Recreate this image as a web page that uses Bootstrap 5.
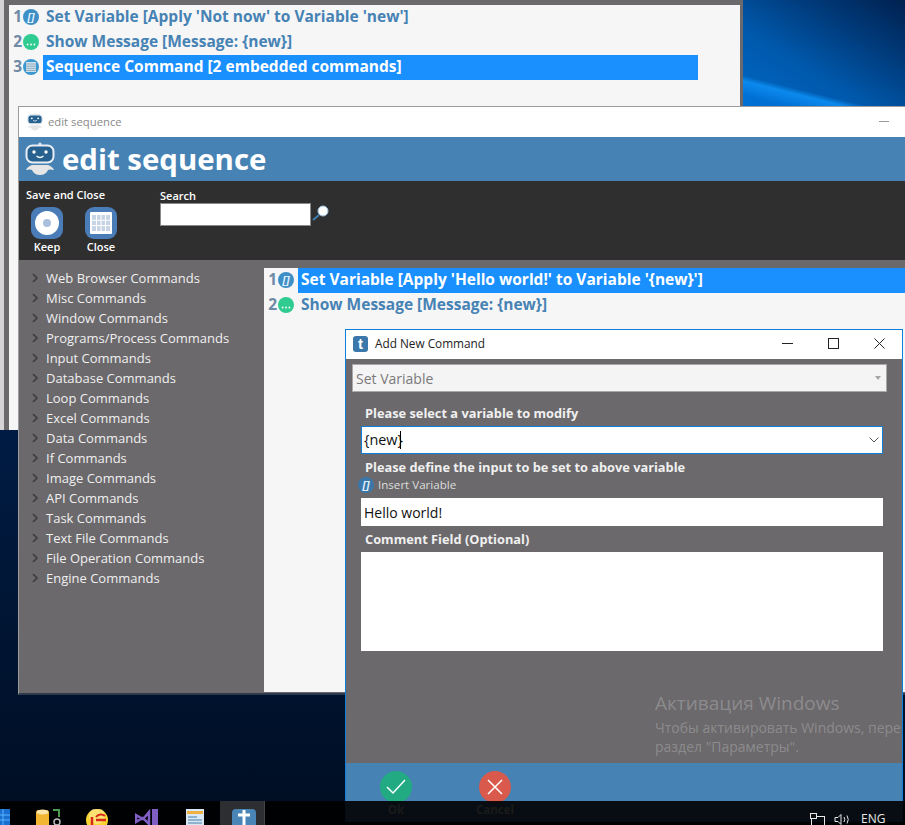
<!DOCTYPE html>
<html lang="en">
<head>
<meta charset="utf-8">
<title>edit sequence</title>
<link href="https://cdn.jsdelivr.net/npm/bootstrap@5.3.0/dist/css/bootstrap.min.css" rel="stylesheet">
<style>
html,body{width:905px;height:825px;overflow:hidden;margin:0}
body{font-family:"Open Sans","Noto Sans",sans-serif;
 background:
  linear-gradient(194deg,transparent 0 79%,rgba(12,140,240,.95) 83%,rgba(8,130,232,.9) 87%,rgba(0,112,214,.9) 93%) 743px 0/162px 106px no-repeat,
  linear-gradient(212deg,#00214f 0%,#003a7a 30%,#0058ab 62%,#0068c4 100%) 743px 0/162px 106px no-repeat,
  linear-gradient(180deg,#00173a 0%,#001c45 50%,#000e22 100%)}
.scene{position:relative;width:905px;height:825px;overflow:hidden}
.win{position:absolute}
.win-back{left:0;top:0;width:743px;height:430px;background:#6b696c;padding:5px 3px 0 9px}
.back-strip{position:absolute;left:0;top:0;width:4px;height:100%;background:#d4d4d4}
.pane{background:#f6f6f6}
.back-pane{height:425px}
.cmd-row{height:25px;display:flex;align-items:center;font-weight:700;font-size:15.5px;color:#4682b4;white-space:nowrap}
.cmd-num{width:13px;text-align:right;color:#6e8aa6;font-size:15.5px;line-height:23px;height:25px}
.cmd-ico{width:16px;height:16px;margin:0 4px 2px 1px;flex:none;display:block}
.cmd-txt{padding-left:3px;line-height:23px;height:25px;flex:none}
.cmd-on{background:#1a90ff;color:#fff}
.back-pane .cmd-on{width:655px}
.ico-var{border-radius:50%;background:#3e8fc6;color:#e4f3ff;font:italic 700 10.5px/16px "Liberation Sans",sans-serif;text-align:center}
.win-edit{left:18px;top:106px;width:900px;height:589px;background:#6b696c;border:1px solid #9c9c9c;border-bottom:2px solid #2c3a4c;display:flex;flex-direction:column}
.edit-title{height:30px;background:#fff;display:flex;align-items:center;padding-left:8px;font-size:11.3px;color:#8a8a8a;flex:none}
.edit-title svg{margin-right:5px}
.edit-min{position:absolute;left:860px;top:14px;width:10px;height:1px;background:#9a9a9a}
.edit-head{height:44px;background:#4682b4;display:flex;align-items:center;padding-left:6px;flex:none;color:#fff;font-weight:700;font-size:29.4px;line-height:46px}
.edit-head svg{margin-right:7px}
.edit-tools{height:79px;background:#2f2f2f;flex:none;display:flex;color:#fff;font-size:11px;font-weight:600;padding-left:7px}
.tool-group{width:134px;padding-top:6px;line-height:15px}
.tool-btns{display:flex;gap:22px;padding-left:5px;padding-top:5px}
.tool-btn{width:32px;text-align:center}
.tool-btn svg{display:block}
.tool-btn span{display:block;margin-top:0;line-height:15px}
.search-box{padding-top:8px;line-height:14px}
.search-line{display:flex;align-items:flex-start}
.search-in{width:151px;height:23px;background:#fff;border:1px solid #8a8a8a}
.edit-body{flex:1;display:flex;min-height:0}
.side{width:245px;flex:none;padding-top:8px;color:#f0f0f0;font-size:13px}
.side-row{height:20px;line-height:20px;display:flex;align-items:center;padding-left:13px;white-space:nowrap}
.side-row svg{margin-right:8px;flex:none}
.main{flex:1;margin-top:8px;background:#f6f6f6;height:424px}
.main .cmd-num{width:13px}
.main .cmd-on{flex:1}
.win-add{left:345px;top:329px;width:558px;height:493px;background:#6b696c;border:1px solid #0f7fdc;display:flex;flex-direction:column}
.add-title{height:29px;background:#fff;display:flex;align-items:center;font-size:11.8px;color:#222;padding:0 0 2px 7px;flex:none}
.t-logo{width:15px;height:16px;border-radius:3px;background:#3a78ab;color:#fff;font:700 15px/15px "Liberation Sans",sans-serif;text-align:center;margin-right:7px}
.win-ctrls{margin-left:auto;display:flex;gap:31px;padding-right:17px;align-items:center}
.win-ctrls svg{display:block}
.add-body{flex:1;display:flex;flex-direction:column;padding:5px 15px 0 6px;min-height:0}
.combo{height:28px;background:#f4f4f4;border:1px solid #a8a8a8;display:flex;align-items:center;color:#7a7a7a;font-size:14px;padding:0 4px 0 3px}
.caret-d{margin-left:auto;width:0;height:0;border:3px solid transparent;border-top:4px solid #a5a5a5;border-bottom:0;margin-right:1px}
.fld-label{color:#f0f0f0;font-weight:700;font-size:12.8px;line-height:16px;padding-left:13px}
.lab1{margin-top:13px}
.lab2{margin-top:5px}
.lab3{margin-top:5px}
.fld{margin-left:9px;margin-right:4px;background:#fff;color:#111;font-size:14px;display:flex;align-items:center;padding-left:3px;height:28px}
.fld-sel{margin-top:5px;border:1px solid #0f7fdc;padding-left:2px;font-size:14.4px}
.cursor{display:inline-block;width:1px;height:18px;background:#000;margin-left:-3px}
.chev{margin-left:auto;margin-right:3px}
.ins-var{display:flex;align-items:center;height:16px;margin-top:2px;padding-left:6px;font-size:11.6px;color:#dcdcdc;margin-bottom:5px}
.ins-var .cmd-ico{margin:0 4px 0 0;background:#3a78ab}
.fld-area{height:99px;margin-top:5px;flex:none}
.add-foot{height:58px;background:#4682b4;flex:none;display:flex;padding-left:34px;gap:67px;color:#fff;font-size:11.5px;font-weight:700;text-align:center}
.foot-btn{width:32px;padding-top:8px}
.foot-btn svg{display:block}
.foot-btn span{display:block;line-height:14px;white-space:nowrap;margin-left:-10px;margin-right:-10px}
.activate{position:absolute;left:655px;top:690px;color:rgba(255,255,255,.24);font-size:14px;line-height:19px;white-space:nowrap;z-index:3}
.activate b{display:block;font-weight:400;font-size:19px;line-height:26px;margin-bottom:2px}
.taskbar{position:absolute;left:0;top:801px;width:905px;height:24px;background:rgba(0,0,0,.9);z-index:5;overflow:hidden}
.task-tile{position:absolute;top:0;height:24px}
.task-on{left:220px;width:45px;background:#2c2e31;border-right:1px solid #444}
.tray{position:absolute;left:810px;top:12px;display:flex;align-items:center;gap:9px;color:#e8e8e8;font-size:12px;line-height:12px;white-space:nowrap}
.task-ico{position:absolute;top:8px;display:block}
.ti-a{left:-2px}.ti-b{left:35px}.ti-c{left:86px}.ti-d{left:135px}.ti-e{left:186px}.ti-f{left:12px}
</style>
</head>
<body>
<svg width="0" height="0" class="d-none">
<defs>
<symbol id="robot" viewBox="0 0 30 34">
 <circle cx="15" cy="2" r="1.6" fill="#dfe8f0"/>
 <rect x="1.5" y="3.5" width="27" height="17" rx="6" fill="#27618f" stroke="#e8eef3" stroke-width="2"/>
 <circle cx="9" cy="10" r="1.7" fill="#fff"/><circle cx="21" cy="10" r="1.7" fill="#fff"/>
 <path d="M11.5 14q3.5 3 7 0" stroke="#fff" stroke-width="1.4" fill="none"/>
 <path d="M7 23h16q5 2 6 5-5-1-6 0-2 5-8 5t-8-5q-1-1-6 0 1-3 6-5z" fill="#e6e6e6"/>
</symbol>
<symbol id="msg" viewBox="0 0 16 16">
 <circle cx="8" cy="8" r="8" fill="#2fcb91"/>
 <circle cx="4.6" cy="10.5" r=".9" fill="#fff"/><circle cx="8" cy="10.5" r=".9" fill="#fff"/><circle cx="11.4" cy="10.5" r=".9" fill="#fff"/>
</symbol>
<symbol id="seq" viewBox="0 0 16 16">
 <circle cx="8" cy="8" r="8" fill="#3a97cf"/>
 <rect x="3" y="3" width="10" height="10" fill="#cfe0ea"/>
 <path d="M3 5h10M3 7.2h10M3 9.4h10M3 11.5h10" stroke="#8aa8bb" stroke-width=".9"/>
</symbol>
<symbol id="chev" viewBox="0 0 6 10"><path d="M1 1l4 4-4 4" fill="none" stroke="#3f3f3f" stroke-width="1.7"/></symbol>
</defs>
</svg>
<div class="scene">

 <div class="win win-back">
  <div class="back-strip"></div>
  <div class="pane back-pane">
   <div class="cmd-row"><span class="cmd-num">1</span><span class="cmd-ico ico-var">[]</span><span class="cmd-txt">Set Variable [Apply 'Not now' to Variable 'new']</span></div>
   <div class="cmd-row"><span class="cmd-num">2</span><svg class="cmd-ico"><use href="#msg"/></svg><span class="cmd-txt">Show Message [Message: {new}]</span></div>
   <div class="cmd-row"><span class="cmd-num">3</span><svg class="cmd-ico"><use href="#seq"/></svg><span class="cmd-txt cmd-on">Sequence Command [2 embedded commands]</span></div>
  </div>
 </div>

 <div class="win win-edit">
  <div class="edit-title"><svg width="16" height="18"><use href="#robot"/></svg>edit sequence<span class="edit-min"></span></div>
  <div class="edit-head"><svg width="30" height="34"><use href="#robot"/></svg>edit sequence</div>
  <div class="edit-tools">
   <div class="tool-group">Save and Close
    <div class="tool-btns">
     <div class="tool-btn"><svg width="32" height="32"><rect width="32" height="32" rx="9" fill="#4a7db8"/><circle cx="16" cy="16" r="12" fill="#fff"/><circle cx="16" cy="16" r="4" fill="#a9c0dc"/></svg><span>Keep</span></div>
     <div class="tool-btn"><svg width="32" height="32"><rect width="32" height="32" rx="9" fill="#4a7db8"/><rect x="5" y="5" width="22" height="22" rx="1" fill="#fff"/><path d="M7 8h18v16H7z" fill="#c6d4e6"/><path d="M11.5 8v16M16 8v16M20.5 8v16M7 13.3h18M7 18.6h18" stroke="#fff"/></svg><span>Close</span></div>
    </div>
   </div>
   <div class="search-box">Search
    <div class="search-line"><div class="search-in"></div><svg width="18" height="20"><path d="M2 17l6-5" stroke="#3f7eb1" stroke-width="2"/><circle cx="12" cy="8" r="5" fill="#fff" stroke="#9cc3e4"/></svg></div>
   </div>
  </div>
  <div class="edit-body">
   <div class="side">
    <div class="side-row"><svg width="6" height="10"><use href="#chev"/></svg>Web Browser Commands</div>
    <div class="side-row"><svg width="6" height="10"><use href="#chev"/></svg>Misc Commands</div>
    <div class="side-row"><svg width="6" height="10"><use href="#chev"/></svg>Window Commands</div>
    <div class="side-row"><svg width="6" height="10"><use href="#chev"/></svg>Programs/Process Commands</div>
    <div class="side-row"><svg width="6" height="10"><use href="#chev"/></svg>Input Commands</div>
    <div class="side-row"><svg width="6" height="10"><use href="#chev"/></svg>Database Commands</div>
    <div class="side-row"><svg width="6" height="10"><use href="#chev"/></svg>Loop Commands</div>
    <div class="side-row"><svg width="6" height="10"><use href="#chev"/></svg>Excel Commands</div>
    <div class="side-row"><svg width="6" height="10"><use href="#chev"/></svg>Data Commands</div>
    <div class="side-row"><svg width="6" height="10"><use href="#chev"/></svg>If Commands</div>
    <div class="side-row"><svg width="6" height="10"><use href="#chev"/></svg>Image Commands</div>
    <div class="side-row"><svg width="6" height="10"><use href="#chev"/></svg>API Commands</div>
    <div class="side-row"><svg width="6" height="10"><use href="#chev"/></svg>Task Commands</div>
    <div class="side-row"><svg width="6" height="10"><use href="#chev"/></svg>Text File Commands</div>
    <div class="side-row"><svg width="6" height="10"><use href="#chev"/></svg>File Operation Commands</div>
    <div class="side-row"><svg width="6" height="10"><use href="#chev"/></svg>Engine Commands</div>
   </div>
   <div class="main">
    <div class="cmd-row"><span class="cmd-num">1</span><span class="cmd-ico ico-var">[]</span><span class="cmd-txt cmd-on">Set Variable [Apply 'Hello world!' to Variable '{new}']</span></div>
    <div class="cmd-row"><span class="cmd-num">2</span><svg class="cmd-ico"><use href="#msg"/></svg><span class="cmd-txt">Show Message [Message: {new}]</span></div>
   </div>
  </div>
 </div>

 <div class="win win-add">
  <div class="add-title"><span class="t-logo">t</span>Add New Command
   <div class="win-ctrls">
    <svg width="11" height="11"><path d="M0 5.5h11" stroke="#222"/></svg>
    <svg width="11" height="11" class="ms-1"><rect x=".5" y=".5" width="10" height="10" fill="none" stroke="#222"/></svg>
    <svg width="11" height="11" class="ms-1"><path d="M.5.5l10 10M10.5.5l-10 10" stroke="#222"/></svg>
   </div>
  </div>
  <div class="add-body">
   <div class="combo">Set Variable<span class="caret-d"></span></div>
   <div class="fld-label lab1">Please select a variable to modify</div>
   <div class="fld fld-sel">{new}<span class="cursor"></span><svg class="chev" width="10" height="6"><path d="M.5.5l4.5 4.5 4.500-4.500" fill="none" stroke="#555"/></svg></div>
   <div class="fld-label lab2">Please define the input to be set to above variable</div>
   <div class="ins-var"><span class="cmd-ico ico-var">[]</span>Insert Variable</div>
   <div class="fld">Hello world!</div>
   <div class="fld-label lab3">Comment Field (Optional)</div>
   <div class="fld fld-area"></div>
  </div>
  <div class="add-foot">
   <div class="foot-btn"><svg width="32" height="32"><circle cx="16" cy="16" r="16" fill="#22ab83"/><path d="M7 16l6 6 12-13" fill="none" stroke="#fff" stroke-width="1.5"/></svg><span>Ok</span></div>
   <div class="foot-btn"><svg width="32" height="32"><circle cx="16" cy="16" r="16" fill="#d9594c"/><path d="M9 9l14 14M23 9L9 23" fill="none" stroke="#fff" stroke-width="1.5"/></svg><span>Cancel</span></div>
  </div>
 </div>

 <div class="activate"><b>Активация Windows</b>Чтобы активировать Windows, пере<br>раздел "Параметры".</div>

 <div class="taskbar">
  <svg class="task-ico ti-a" width="12" height="16"><rect width="12" height="20" fill="#1a6fd0"/><path d="M0 6h12M0 11h12M5 0v20" stroke="#58b4ff"/></svg>
  <svg class="task-ico ti-b" width="26" height="16"><rect x="1" y="1" width="13" height="20" rx="3" fill="#f2b632"/><ellipse cx="7.500" cy="3" rx="6" ry="2.500" fill="#fbe6a8"/><path d="M18 1h6v7" fill="none" stroke="#4e9a50" stroke-width="2"/><circle cx="22" cy="13" r="3" fill="none" stroke="#bbb" stroke-width="1.500"/></svg>
  <svg class="task-ico ti-c" width="23" height="16"><circle cx="11" cy="11" r="11" fill="#f9d332"/><circle cx="11" cy="7" r="8" fill="#fff3b0" opacity=".5"/><path d="M6 8v9M10 11h10" stroke="#d9281b" stroke-width="2.500"/><path d="M19 7a6 6 0 0 0-9 1" stroke="#d9281b" stroke-width="2" fill="none"/></svg>
  <svg class="task-ico ti-d" width="24" height="16"><path d="M1 6l5 3 3 0 5-6v12l-5-5H6l-5 3z" fill="none" stroke="#7f5fc4" stroke-width="2.500"/><rect x="17" y="0" width="6" height="16" fill="#7f5fc4"/></svg>
  <svg class="task-ico ti-e" width="18" height="16"><rect width="18" height="20" fill="#d8e8f4"/><rect x="1" y="2" width="16" height="3" fill="#f0b040"/><path d="M2 8h9M2 11h14M2 14h14" stroke="#7aa0c0" stroke-width="1.500"/></svg>
  <div class="task-tile task-on"><svg class="task-ico ti-f" width="24" height="16"><rect width="24" height="24" rx="4" fill="#4a85b8"/><path d="M12 1v15M6 6h12" stroke="#fff" stroke-width="3"/></svg></div>
  <div class="tray">
   <svg width="15" height="12"><rect x="1.500" y="3.500" width="13" height="9" fill="none" stroke="#e8e8e8"/><rect x=".5" y=".5" width="6" height="5" fill="#111" stroke="#e8e8e8"/></svg>
   <svg width="18" height="12"><path d="M1 4.500h3l3-3v10l-3-3H1zM10 4q1.500 2.500 0 5M13 2.500q2.500 4 0 8" fill="none" stroke="#e8e8e8"/></svg>
   <span>ENG</span>
  </div>
 </div>
</div>
<script src="https://cdn.jsdelivr.net/npm/bootstrap@5.3.0/dist/js/bootstrap.bundle.min.js"></script>
</body>
</html>
